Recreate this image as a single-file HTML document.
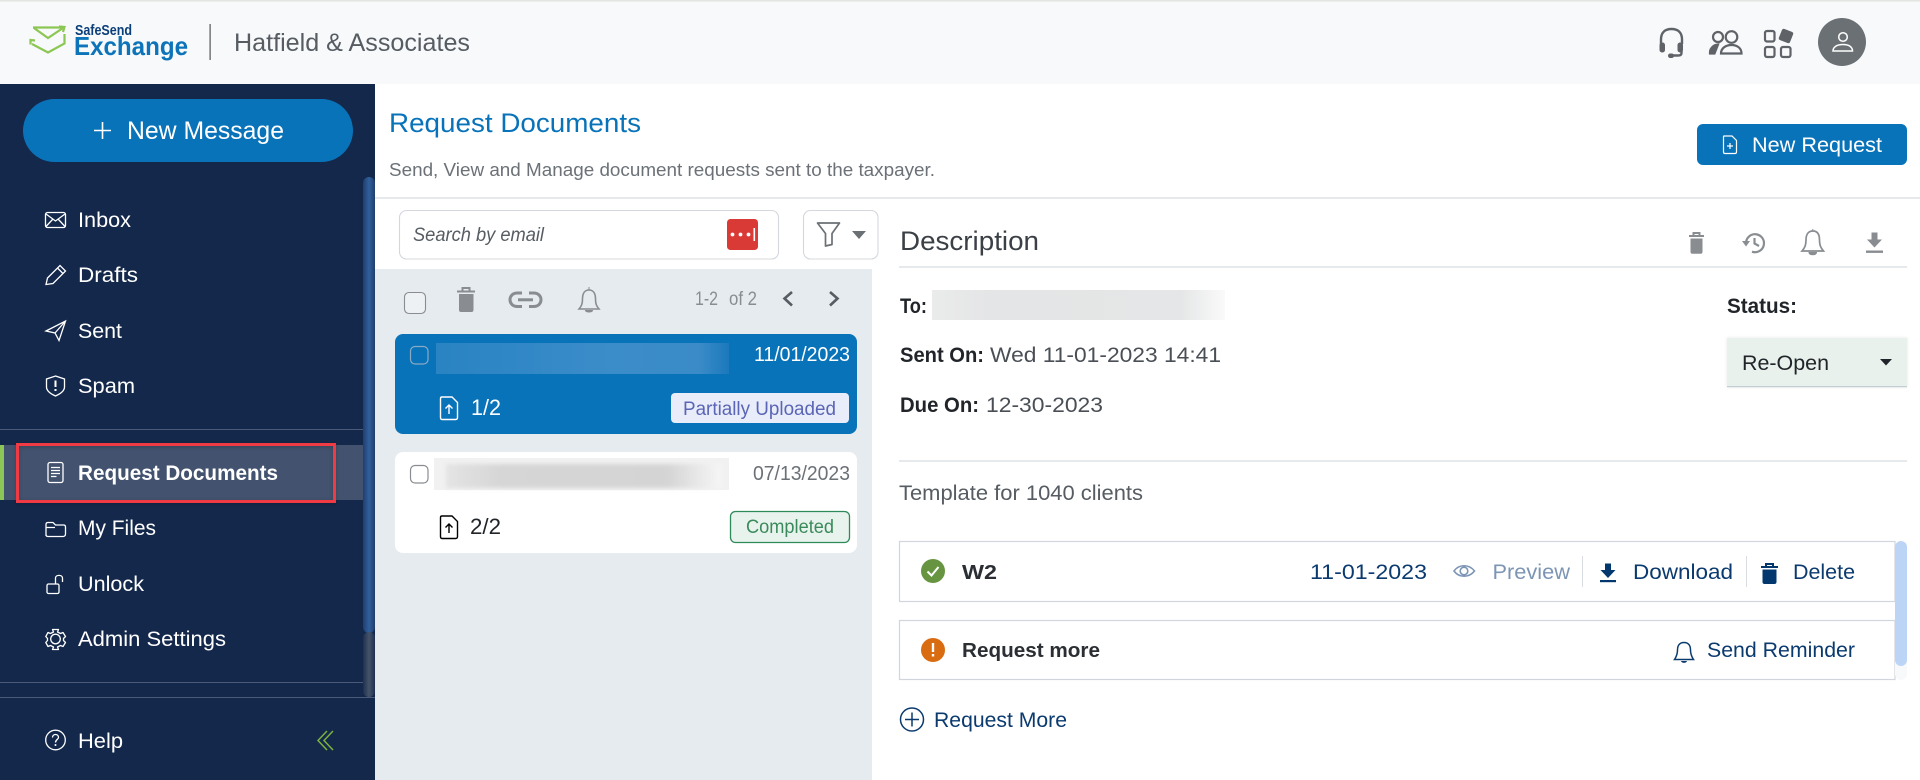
<!DOCTYPE html>
<html><head><meta charset="utf-8"><title>Request Documents</title>
<style>
html,body{margin:0;padding:0;width:1920px;height:780px;overflow:hidden;background:#fff}
svg{display:block}
text{font-family:"Liberation Sans",sans-serif}
.n{fill:#fff;font-size:21px}
.d{fill:#212529;font-size:21px}
.g{fill:#565c62;font-size:21px}
.b{font-weight:bold}
.l{fill:#0b3a6f;font-size:21px}
</style></head><body>
<svg width="1920" height="780" viewBox="0 0 1920 780" xmlns="http://www.w3.org/2000/svg">
<defs>
<linearGradient id="b1" x1="0" x2="1" y1="0" y2="0"><stop offset="0" stop-color="#2a83c2"/><stop offset=".25" stop-color="#3087c5"/><stop offset=".6" stop-color="#3b8dc9"/><stop offset=".9" stop-color="#3a8bc7"/><stop offset="1" stop-color="#1b79bc"/></linearGradient>
<linearGradient id="b2" x1="0" x2="1" y1="0" y2="0"><stop offset="0" stop-color="#e4e4e4"/><stop offset=".2" stop-color="#d6d6d6"/><stop offset=".8" stop-color="#d4d4d4"/><stop offset="1" stop-color="#f6f6f6"/></linearGradient>
<linearGradient id="b3" x1="0" x2="1" y1="0" y2="0"><stop offset="0" stop-color="#eaebeb"/><stop offset=".2" stop-color="#e4e5e6"/><stop offset=".85" stop-color="#e5e6e7"/><stop offset="1" stop-color="#fafafa"/></linearGradient>
<linearGradient id="sb" x1="0" x2="1" y1="0" y2="0"><stop offset="0" stop-color="#1f3e6e"/><stop offset=".5" stop-color="#31609c"/><stop offset="1" stop-color="#1f3e6e"/></linearGradient>
<linearGradient id="sg" x1="0" x2="1" y1="0" y2="0"><stop offset="0" stop-color="#1f3050"/><stop offset=".5" stop-color="#46546a"/><stop offset="1" stop-color="#1f3050"/></linearGradient>
<filter id="sh" x="-5%" y="-20%" width="110%" height="140%"><feDropShadow dx="0" dy="1" stdDeviation="2" flood-color="#000" flood-opacity=".25"/></filter>
<filter id="sh2" x="-5%" y="-20%" width="110%" height="140%"><feDropShadow dx="0" dy="0" stdDeviation="1.500" flood-color="#000" flood-opacity=".1"/></filter>
<filter id="soft" x="-5%" y="-30%" width="110%" height="160%"><feGaussianBlur stdDeviation="2"/></filter>
</defs>

<!-- header -->
<rect x="0" y="0" width="1920" height="84" fill="#f8f9fb"/>
<rect x="0" y="0" width="1920" height="1.500" fill="#e2e5e0"/>
<g fill="none" stroke="#8cc653" stroke-width="2.200">
<path d="M33 27.500H62"/><path d="M34 28L48 38L63 28"/><path d="M59 26.500L64.500 27L63 32"/>
<path d="M32 44L48 52.500L64.500 43.500V34"/><path d="M30.500 44.500V40L35 40.500"/>
</g>
<text x="75" y="35" textLength="57" lengthAdjust="spacingAndGlyphs" font-size="15" font-weight="bold" fill="#0b3f7a">SafeSend</text>
<text x="74" y="55" textLength="114" lengthAdjust="spacingAndGlyphs" font-size="26" font-weight="bold" fill="#0d74b9">Exchange</text>
<rect x="209.500" y="24" width="1.200" height="36" fill="#555"/>
<text x="234" y="51" textLength="236" lengthAdjust="spacingAndGlyphs" font-size="25" fill="#565c62">Hatfield &amp; Associates</text>

<!-- header icons -->
<g fill="none" stroke="#5f6368" stroke-width="2.400">
<path d="M1661 44V39.500C1661 32.500 1665 29 1671.500 29S1682 32.500 1682 39.500V44"/>
<rect x="1660" y="43" width="4.500" height="9" rx="2" fill="#5f6368" stroke-width="1"/>
<rect x="1678" y="43" width="4.500" height="9" rx="2" fill="#5f6368" stroke-width="1"/>
<path d="M1681.500 51V53C1681.500 55 1680 55.500 1678 55.500H1672"/>
<rect x="1668.500" y="54" width="5" height="3.500" rx="1.700" fill="#5f6368" stroke-width="1"/>
</g>
<g fill="none" stroke="#5f6368" stroke-width="2.200">
<circle cx="1718" cy="37" r="5"/><circle cx="1731.500" cy="37" r="5.800"/>
<path d="M1710 53.500C1709.500 49 1713 45 1718 44.500L1714.500 53.500Z" fill="#5f6368"/>
<path d="M1721 53.500C1721 48 1726 45 1731.500 45S1741.500 48 1741.500 53.500Z"/>
<rect x="1765" y="31" width="9.500" height="10.500" rx="2"/>
<rect x="1765" y="47" width="9.500" height="10" rx="2"/>
<rect x="1781" y="47" width="9.500" height="10" rx="2"/>
</g>
<rect x="1780" y="30" width="12" height="12" rx="2" transform="rotate(22 1786 36)" fill="#5f6368"/>
<circle cx="1842" cy="42" r="24" fill="#6b7075"/>
<circle cx="1843" cy="37" r="4.300" fill="none" stroke="#fff" stroke-width="1.500"/>
<path d="M1833 51C1833 47 1837 44.500 1843 44.500S1852.500 47 1852.500 51Z" fill="none" stroke="#fff" stroke-width="1.500"/>

<!-- sidebar -->
<rect x="0" y="84" width="375" height="696" fill="#14284b"/>
<rect x="23" y="99" width="330" height="63" rx="31.500" fill="#0973ba"/>
<path d="M94 130.500H111M102.500 122V139" stroke="#fff" stroke-width="1.600" fill="none"/>
<text x="127" y="139" textLength="157" lengthAdjust="spacingAndGlyphs" class="n" style="font-size:25px">New Message</text>

<rect x="363" y="177" width="12" height="456" rx="6" fill="url(#sb)"/>
<rect x="363" y="632" width="12" height="65" rx="6" fill="url(#sg)"/>

<!-- nav icons -->
<g fill="none" stroke="#fff" stroke-width="1.300">
<rect x="45.500" y="212.500" width="20" height="15" rx="2"/><path d="M46 214L55.500 221L65 214M46 226.500L52.500 219.500M65 226.500L58.500 219.500"/>
<path d="M46 284.500L47.500 278L60 265.500L65.500 271L53 283.500Z M57.500 268L63 273.500"/>
<path d="M46 331L65.500 321L59 340.500L55 333ZM55 333L65.500 321"/>
<path d="M55.500 376L64.500 379V387C64.500 391 60 394 55.500 396C51 394 46.500 391 46.500 387V379Z"/>
<path d="M46 536V524.500C46 523 47 522.500 48 522.500H53L55.500 525H63.500C65 525 65.500 526 65.500 527V534C65.500 535.500 64.500 536.500 63 536.500H48C46.800 536.500 46 536 46 534.500ZM46 527.500H55"/>
<rect x="47" y="584" width="12" height="9.500" rx="1.500"/><path d="M55.500 584V578C55.500 574.500 62.500 574.500 62.500 578V582"/>
<circle cx="55.500" cy="639" r="4.800"/>
<path d="M52.500 629.500L53.500 632L50.500 633.500L48 632.500L45.800 636.500L47.500 638.500V640.500L45.800 642.500L48 646.500L50.500 645.500L53.500 647L52.500 649.500H58.500L57.500 647L60.500 645.500L63 646.500L65.500 642.500L63.500 640.500V638.500L65.500 636.500L63 632.500L60.500 633.500L57.500 632L58.500 629.500Z" stroke-linejoin="round"/>
<circle cx="55.500" cy="740" r="9.800"/><path d="M52.500 737.500C52.500 733.500 58.500 733.500 58.500 737.500C58.500 739.500 55.500 739.500 55.500 742.500"/>
</g>
<circle cx="55.500" cy="745" r="1" fill="#fff"/>
<path d="M55.500 380.500V387M55.500 389V391" stroke="#fff" stroke-width="2" fill="none"/>

<text x="78" y="227" textLength="53" lengthAdjust="spacingAndGlyphs" class="n">Inbox</text>
<text x="78" y="282" textLength="60" lengthAdjust="spacingAndGlyphs" class="n">Drafts</text>
<text x="78" y="338" textLength="44" lengthAdjust="spacingAndGlyphs" class="n">Sent</text>
<text x="78" y="393" textLength="57" lengthAdjust="spacingAndGlyphs" class="n">Spam</text>
<rect x="0" y="429" width="363" height="1" fill="#4a5a78"/>
<rect x="0" y="445" width="363" height="55" fill="#43536f"/>
<rect x="0" y="445" width="4" height="55" fill="#8bc656"/>
<g fill="none" stroke="#fff" stroke-width="1.300">
<rect x="48" y="462.500" width="15" height="20" rx="2"/><path d="M51 467.500H60M51 470.500H60M51 473.500H60M51 476.500H56.500"/>
</g>
<rect x="17.500" y="444.500" width="317" height="57" fill="none" stroke="#f03a45" stroke-width="3" filter="url(#sh)"/>
<text x="78" y="480" textLength="200" lengthAdjust="spacingAndGlyphs" class="n b">Request Documents</text>
<text x="78" y="535" textLength="78" lengthAdjust="spacingAndGlyphs" class="n">My Files</text>
<text x="78" y="591" textLength="66" lengthAdjust="spacingAndGlyphs" class="n">Unlock</text>
<text x="78" y="646" textLength="148" lengthAdjust="spacingAndGlyphs" class="n">Admin Settings</text>
<rect x="0" y="682" width="363" height="1" fill="#4a5a78"/>
<rect x="0" y="697" width="375" height="1" fill="#4a5a78"/>
<text x="78" y="748" textLength="45" lengthAdjust="spacingAndGlyphs" class="n">Help</text>
<path d="M327 731L318 740.500L327 750M333 731L324 740.500L333 750" fill="none" stroke="#7cb23f" stroke-width="1.500"/>

<!-- title -->
<text x="389" y="132" textLength="252" lengthAdjust="spacingAndGlyphs" font-size="27" fill="#0973ba">Request Documents</text>
<text x="389" y="176" textLength="546" lengthAdjust="spacingAndGlyphs" font-size="18" fill="#6b7177">Send, View and Manage document requests sent to the taxpayer.</text>
<rect x="1697" y="124" width="210" height="41" rx="6" fill="#0973ba"/>
<path d="M1724 136H1732L1736.500 140.500V152C1736.500 153 1736 153.500 1735 153.500H1725C1724 153.500 1723.500 153 1723.500 152V137C1723.500 136.500 1723.700 136 1724 136ZM1727 146H1733M1730 143V149" fill="none" stroke="#fff" stroke-width="1.200"/>
<text x="1752" y="152" textLength="130" lengthAdjust="spacingAndGlyphs" class="n">New Request</text>
<rect x="375" y="197.500" width="1545" height="1" fill="#ced4da"/>

<!-- search -->
<rect x="399.500" y="210.500" width="379" height="48.500" rx="7" fill="#fff" stroke="#d4d8de" stroke-width="1.100"/>
<text x="413" y="241" textLength="131" lengthAdjust="spacingAndGlyphs" font-size="19" font-style="italic" fill="#565c62">Search by email</text>
<rect x="727" y="219" width="31" height="31" rx="3.500" fill="#da3a36"/>
<g fill="#fff"><circle cx="732.500" cy="234.500" r="1.900"/><circle cx="740.500" cy="234.500" r="1.900"/><circle cx="748.500" cy="234.500" r="1.900"/><rect x="753.500" y="228" width="1.600" height="13"/></g>
<rect x="803.500" y="210.500" width="74.500" height="48.500" rx="7" fill="#fff" stroke="#d4d8de" stroke-width="1.100"/>
<path d="M817.500 223H839.500L832 233.500V244.500L825.500 246V233.500Z" fill="none" stroke="#6b7075" stroke-width="1.700" stroke-linejoin="round"/>
<path d="M852 231H866L859 239Z" fill="#6b7075"/>

<!-- list panel -->
<rect x="375" y="269" width="497" height="511" fill="#e6ebef"/>
<rect x="404.500" y="292.500" width="21" height="21" rx="4.500" fill="#eef1f4" stroke="#898d91" stroke-width="1.100"/>
<path d="M457 291.500H475M462.500 291V288H469.500V291" fill="none" stroke="#898d91" stroke-width="2"/>
<path d="M459 294H473.500V310C473.500 311.200 472.700 312 471.500 312H461C459.800 312 459 311.200 459 310Z" fill="#898d91"/>
<g fill="none" stroke="#898d91" stroke-width="3">
<path d="M522 293H517.500C507.500 293 507.500 306.500 517.500 306.500H522M529 293H533.500C543.500 293 543.500 306.500 533.500 306.500H529"/>
<path d="M518 299.800H533"/>
</g>
<g fill="none" stroke="#898d91" stroke-width="1.600">
<path d="M579 309H599C596.500 306 595.500 304 595.500 299C595.500 293 593 290 589 290S582.500 293 582.500 299C582.500 304 581.500 306 579 309Z"/>
</g>
<path d="M589 287V290M585.500 310.500H592.500C592 312.500 586 312.500 585.500 310.500Z" stroke="#898d91" stroke-width="1" fill="#898d91"/>
<text x="695" y="305" textLength="23" lengthAdjust="spacingAndGlyphs" font-size="19" fill="#898d91">1-2</text>
<text x="729" y="305" textLength="28" lengthAdjust="spacingAndGlyphs" font-size="19" fill="#898d91">of 2</text>
<path d="M792 292L784.500 298.500L792 305.500M830 292L837.500 298.500L830 305.500" fill="none" stroke="#565c62" stroke-width="2.600"/>

<!-- card 1 -->
<rect x="395" y="334" width="462" height="100" rx="8" fill="#0973ba"/>
<rect x="410.500" y="346.500" width="17.500" height="17.500" rx="4.500" fill="none" stroke="#8aa9c4" stroke-width="1.200"/>
<rect x="436" y="343" width="293" height="31" fill="url(#b1)"/>
<text x="754" y="361" textLength="96" lengthAdjust="spacingAndGlyphs" font-size="20" fill="#fff">11/01/2023</text>
<path d="M442 397H452L457.500 402.500V417.500C457.500 418.800 456.800 419.500 455.500 419.500H442C440.800 419.500 440.500 418.800 440.500 417.500V398.500C440.500 397.500 441 397 442 397ZM449 414V405M445.500 408.500L449 405L452.500 408.500" fill="none" stroke="#fff" stroke-width="1.400"/>
<text x="471" y="415" textLength="30" lengthAdjust="spacingAndGlyphs" font-size="22" fill="#fff">1/2</text>
<rect x="671" y="393" width="178" height="30" rx="4" fill="#e9edfa"/>
<text x="683" y="415" textLength="153" lengthAdjust="spacingAndGlyphs" font-size="19" fill="#5a65b5">Partially Uploaded</text>

<!-- card 2 -->
<rect x="395" y="452" width="462" height="101" rx="8" fill="#fff"/>
<rect x="410.500" y="465.500" width="17.500" height="17.500" rx="4.500" fill="#fff" stroke="#898d91" stroke-width="1.200"/>
<rect x="434" y="458" width="295" height="32" fill="#f1f1f1"/>
<rect x="446" y="464" width="275" height="24" fill="url(#b2)" filter="url(#soft)"/>
<text x="753" y="480" textLength="97" lengthAdjust="spacingAndGlyphs" font-size="20" fill="#6b7177">07/13/2023</text>
<path d="M442 516H452L457.500 521.500V536.500C457.500 537.800 456.800 538.500 455.500 538.500H442C440.800 538.500 440.500 537.800 440.500 536.500V517.500C440.500 516.500 441 516 442 516ZM449 533V524M445.500 527.500L449 524L452.500 527.500" fill="none" stroke="#000" stroke-width="1.400"/>
<text x="470" y="534" textLength="31" lengthAdjust="spacingAndGlyphs" font-size="22" fill="#212529">2/2</text>
<rect x="730.500" y="511.500" width="119" height="31" rx="5" fill="#e9f3ed" stroke="#2f8a5a" stroke-width="1.300"/>
<text x="746" y="533" textLength="88" lengthAdjust="spacingAndGlyphs" font-size="19" fill="#3b8a5b">Completed</text>

<!-- description -->
<text x="900" y="250" textLength="139" lengthAdjust="spacingAndGlyphs" font-size="27" fill="#3a4046">Description</text>
<rect x="899" y="266.500" width="1008" height="1" fill="#ced4da"/>
<path d="M1689 236H1704M1693.500 236V233H1699.500V236" fill="none" stroke="#898d91" stroke-width="2"/>
<path d="M1690.500 238.500H1702.500V252C1702.500 253 1701.800 253.700 1700.800 253.700H1692.200C1691.200 253.700 1690.500 253 1690.500 252Z" fill="#898d91"/>
<g fill="none" stroke="#898d91" stroke-width="2.200">
<path d="M1746 243.500A9 9 0 1 1 1752 251.700"/>
<path d="M1754.500 238V243.500L1759 246"/>
</g>
<path d="M1742 241H1750L1746 246.500Z" fill="#898d91"/>
<g fill="none" stroke="#898d91" stroke-width="1.700">
<path d="M1802 251H1823.500C1820.500 247.500 1819.500 245 1819.500 240C1819.500 234 1817 231 1812.800 231S1806 234 1806 240C1806 245 1805 247.500 1802 251Z"/>
</g>
<path d="M1812.800 229V231M1809 252.500H1816.500C1816 255.500 1809.500 255.500 1809 252.500Z" stroke="#898d91" stroke-width="1" fill="#898d91"/>
<path d="M1871.500 232.500H1877.500V239.500H1882L1874.500 247.500L1867 239.500H1871.500Z" fill="#898d91"/>
<rect x="1866" y="250.500" width="17" height="2.400" fill="#898d91"/>

<text x="900" y="313" textLength="27" lengthAdjust="spacingAndGlyphs" class="d b">To:</text>
<rect x="932" y="290" width="293" height="30" fill="url(#b3)"/>
<text x="900" y="362" textLength="84" lengthAdjust="spacingAndGlyphs" class="d b">Sent On:</text>
<text x="990" y="362" textLength="231" lengthAdjust="spacingAndGlyphs" class="g" style="fill:#4a4f55">Wed 11-01-2023 14:41</text>
<text x="900" y="412" textLength="79" lengthAdjust="spacingAndGlyphs" class="d b">Due On:</text>
<text x="986" y="412" textLength="117" lengthAdjust="spacingAndGlyphs" class="g" style="fill:#4a4f55">12-30-2023</text>

<text x="1727" y="313" textLength="70" lengthAdjust="spacingAndGlyphs" class="d b">Status:</text>
<rect x="1727" y="338" width="180" height="49" fill="#e8f1ec" filter="url(#sh2)"/>
<rect x="1727" y="386" width="180" height="1.200" fill="#c4ccd4"/>
<text x="1742" y="370" textLength="87" lengthAdjust="spacingAndGlyphs" class="d">Re-Open</text>
<path d="M1880 359H1892L1886 365.500Z" fill="#212529"/>

<rect x="899" y="460.500" width="1008" height="1" fill="#ced4da"/>
<text x="899" y="500" textLength="244" lengthAdjust="spacingAndGlyphs" class="g">Template for 1040 clients</text>

<!-- attachments -->
<rect x="899.500" y="541.500" width="995.500" height="60" fill="#fff" stroke="#d2d6dc" stroke-width="1.200"/>
<rect x="899.500" y="620.500" width="995.500" height="59" fill="#fff" stroke="#d2d6dc" stroke-width="1.200"/>
<rect x="1895" y="541" width="12" height="139" rx="6" fill="#f8f9fa"/>
<rect x="1895" y="541" width="12" height="125" rx="6" fill="#bcd5f7"/>

<circle cx="933" cy="571" r="12" fill="#669440"/>
<path d="M927.500 571.500L931.500 575.500L938.500 567" fill="none" stroke="#fff" stroke-width="2"/>
<text x="962" y="579" textLength="35" lengthAdjust="spacingAndGlyphs" class="d b" style="font-size:20.500px;fill:#2b2f33">W2</text>
<text x="1310" y="579" textLength="117" lengthAdjust="spacingAndGlyphs" class="l">11-01-2023</text>
<path d="M1454 571C1459 564 1469 564 1474.500 571C1469 578 1459 578 1454 571Z" fill="none" stroke="#7d95b5" stroke-width="1.600"/>
<circle cx="1464" cy="571" r="3.800" fill="none" stroke="#7d95b5" stroke-width="1.600"/>
<text x="1492.500" y="579" textLength="77.500" lengthAdjust="spacingAndGlyphs" class="l" style="fill:#7d95b5">Preview</text>
<rect x="1582" y="556" width="1" height="31" fill="#d9dce0"/>
<path d="M1605 563.500H1611V570H1615.500L1608 578L1600.500 570H1605Z" fill="#03386f"/>
<rect x="1600" y="580" width="16" height="2.200" fill="#03386f"/>
<text x="1633" y="579" textLength="100" lengthAdjust="spacingAndGlyphs" class="l">Download</text>
<rect x="1746" y="556" width="1" height="31" fill="#d9dce0"/>
<path d="M1761 567H1778M1766 567V564H1773V567" fill="none" stroke="#03386f" stroke-width="2"/>
<path d="M1762.500 569.500H1776.500V582C1776.500 583.200 1775.700 584 1774.500 584H1764.500C1763.300 584 1762.500 583.200 1762.500 582Z" fill="#03386f"/>
<text x="1793" y="579" textLength="62" lengthAdjust="spacingAndGlyphs" class="l">Delete</text>

<circle cx="933" cy="650" r="12" fill="#d96b10"/>
<rect x="931.800" y="643" width="2.400" height="9" fill="#fff"/><rect x="931.800" y="654" width="2.400" height="2.500" fill="#fff"/>
<text x="962" y="657" textLength="138" lengthAdjust="spacingAndGlyphs" class="d b" style="font-size:20.500px;fill:#2b2f33">Request more</text>
<path d="M1674.500 659.500H1693.500C1691.500 656.500 1690.500 654 1690.500 650C1690.500 645 1688 642.500 1684 642.500S1677.500 645 1677.500 650C1677.500 654 1676.500 656.500 1674.500 659.500Z" fill="none" stroke="#0b3a6f" stroke-width="1.500"/>
<path d="M1681 661H1687C1686.500 663.500 1681.500 663.500 1681 661Z" fill="#0b3a6f"/>
<text x="1707" y="657" textLength="148" lengthAdjust="spacingAndGlyphs" class="l">Send Reminder</text>

<circle cx="912" cy="719.500" r="11.500" fill="none" stroke="#0b3a6f" stroke-width="1.500"/>
<path d="M905 719.500H919M912 712.500V726.500" stroke="#0b3a6f" stroke-width="1.500" fill="none"/>
<text x="934" y="727" textLength="133" lengthAdjust="spacingAndGlyphs" class="l">Request More</text>
</svg>
</body></html>
